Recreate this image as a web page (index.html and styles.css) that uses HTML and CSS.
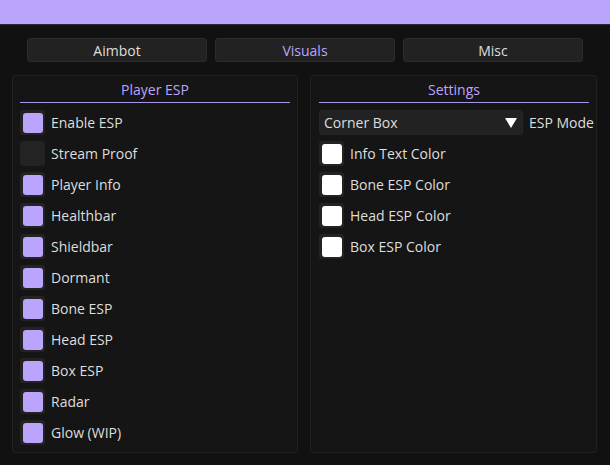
FILE: index.html
```html
<!DOCTYPE html>
<html>
<head>
<meta charset="utf-8">
<link rel="stylesheet" href="styles.css">
</head>
<body>
<div class="titlebar"></div>
<div class="tabs">
  <div class="tab">Aimbot</div>
  <div class="tab active">Visuals</div>
  <div class="tab">Misc</div>
</div>
<div class="panels">
  <div class="panel left">
    <div class="panel-title">Player ESP</div>
    <div class="sep"></div>
    <div class="rows">
      <div class="row"><span class="box"><span class="fill"></span></span><span class="label">Enable ESP</span></div>
      <div class="row"><span class="box"></span><span class="label">Stream Proof</span></div>
      <div class="row"><span class="box"><span class="fill"></span></span><span class="label">Player Info</span></div>
      <div class="row"><span class="box"><span class="fill"></span></span><span class="label">Healthbar</span></div>
      <div class="row"><span class="box"><span class="fill"></span></span><span class="label">Shieldbar</span></div>
      <div class="row"><span class="box"><span class="fill"></span></span><span class="label">Dormant</span></div>
      <div class="row"><span class="box"><span class="fill"></span></span><span class="label">Bone ESP</span></div>
      <div class="row"><span class="box"><span class="fill"></span></span><span class="label">Head ESP</span></div>
      <div class="row"><span class="box"><span class="fill"></span></span><span class="label">Box ESP</span></div>
      <div class="row"><span class="box"><span class="fill"></span></span><span class="label">Radar</span></div>
      <div class="row"><span class="box"><span class="fill"></span></span><span class="label">Glow (WIP)</span></div>
    </div>
  </div>
  <div class="panel right">
    <div class="panel-title">Settings</div>
    <div class="sep"></div>
    <div class="rows">
      <div class="row">
        <div class="combo"><span class="combo-text">Corner Box</span><svg class="arrow" width="12" height="10" viewBox="0 0 12 10"><polygon points="0,0 12,0 6,10" fill="#ffffff"/></svg></div>
        <span class="label">ESP Mode</span>
      </div>
      <div class="row"><span class="box"><span class="fill white"></span></span><span class="label">Info Text Color</span></div>
      <div class="row"><span class="box"><span class="fill white"></span></span><span class="label">Bone ESP Color</span></div>
      <div class="row"><span class="box"><span class="fill white"></span></span><span class="label">Head ESP Color</span></div>
      <div class="row"><span class="box"><span class="fill white"></span></span><span class="label">Box ESP Color</span></div>
    </div>
  </div>
</div>
</body>
</html>
```
FILE: styles.css
```css
html, body {
  margin: 0;
  padding: 0;
  background: #111111;
  width: 610px;
  height: 465px;
  overflow: hidden;
  font-family: "Open Sans", "Noto Sans", sans-serif;
  font-size: 14px;
  color: #dedede;
}
.titlebar {
  height: 24px;
  background: #bba5fc;
  border-bottom: 1px solid #2b2838;
}
.tabs {
  display: flex;
  gap: 8px;
  padding: 13px 27px 0 27px;
}
.tab {
  width: 178px;
  height: 22px;
  background: #222222;
  border: 1px solid #2c2c2c;
  border-radius: 3px;
  display: flex;
  align-items: center;
  justify-content: center;
  line-height: 1;
  padding-top: 1px;
  box-sizing: content-box;
  height: 21px;
}
.tab.active { color: #bba5fc; }
.panels {
  display: flex;
  gap: 12px;
  padding: 13px 12px 0 12px;
}
.panel {
  height: 376px;
  background: #151515;
  border: 1px solid #212121;
  border-radius: 3px;
  padding: 0 7px;
}
.panel.left { width: 270px; }
.panel.right { width: 270px; padding-left: 8px; }
.panel-title {
  color: #bba5fc;
  text-align: center;
  height: 20px;
  line-height: 20px;
  margin-top: 4px;
  margin-bottom: 2px;
}
.sep {
  height: 1px;
  background: #a994e6;
}
.rows {
  display: flex;
  flex-direction: column;
  gap: 6px;
  margin-top: 7px;
}
.row {
  display: flex;
  align-items: center;
  height: 25px;
  gap: 6px;
}
.box {
  width: 25px;
  height: 25px;
  background: #232323;
  border-radius: 3px;
  display: flex;
  align-items: center;
  justify-content: center;
  flex: none;
}
.fill {
  width: 20px;
  height: 20px;
  border-radius: 3px;
  background: #bba5fc;
}
.fill.white { background: #ffffff; }
.label { white-space: nowrap; }
.combo {
  width: 204px;
  height: 25px;
  background: #222222;
  border: 1px solid #262626;
  box-sizing: border-box;
  border-radius: 3px;
  display: flex;
  align-items: center;
  justify-content: space-between;
  padding: 0 5px 0 4px;
  flex: none;
}
.arrow { display: block; }
```
